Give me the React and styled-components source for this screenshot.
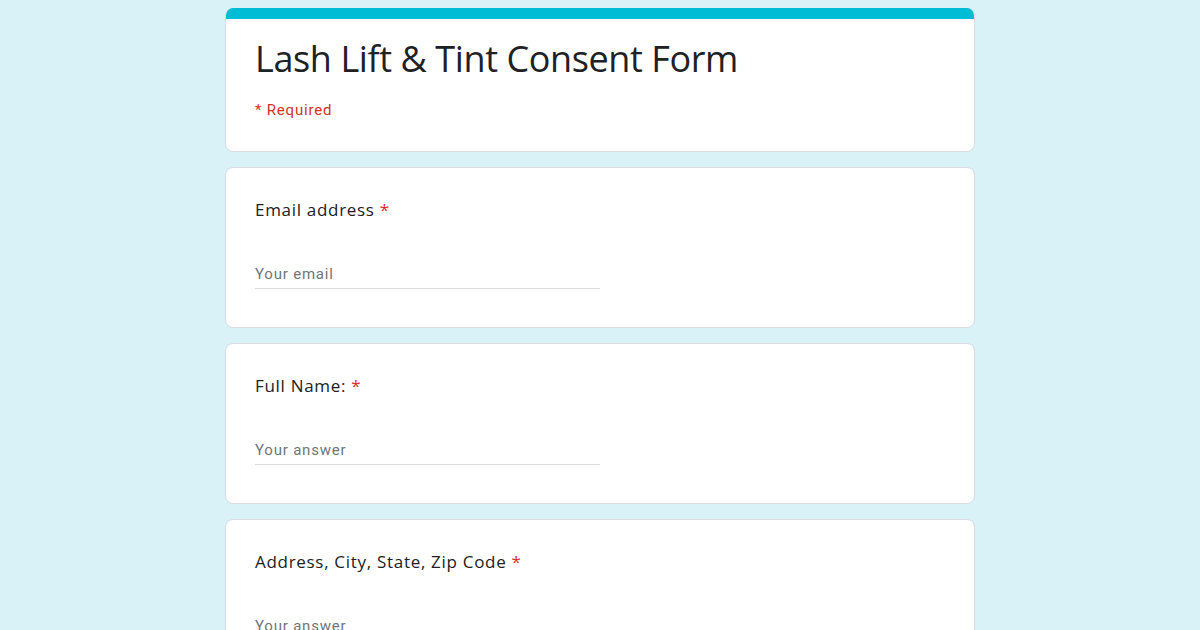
import React from "react";
import styled, { createGlobalStyle } from "styled-components";

const GlobalStyle = createGlobalStyle`
  body {
    margin: 0;
    background: #d9f2f7;
    font-family: "Open Sans", Roboto, sans-serif;
  }
`;

const Page = styled.div`
  width: 750px;
  margin: 8px auto 0;
  display: flex;
  flex-direction: column;
  gap: 15px;
`;

const Card = styled.section`
  background: #fff;
  border: 1px solid #dadce0;
  border-radius: 8px;
  box-sizing: border-box;
  overflow: hidden;
`;

const HeaderCard = styled(Card)`
  border-top: none;
  height: 144px;
`;

const TopBar = styled.div`
  height: 11px;
  background: #00bcd4;
`;

const HeaderBody = styled.div`
  padding: 16px 29px 0;
`;

const Title = styled.h1`
  margin: 0;
  font-family: "Open Sans", sans-serif;
  font-weight: 400;
  font-size: 36px;
  line-height: 48px;
  letter-spacing: -0.4px;
  color: #202124;
`;

const Required = styled.div`
  margin-top: 17px;
  font-family: Roboto, sans-serif;
  font-size: 15px;
  line-height: 20px;
  letter-spacing: 0.8px;
  color: #d93025;
`;

const QuestionCard = styled(Card)`
  height: 161px;
  padding: 30px 29px 0;
`;

const Label = styled.div`
  font-family: "Open Sans", sans-serif;
  font-size: 17px;
  line-height: 24px;
  letter-spacing: 0.7px;
  color: #202124;
`;

const Star = styled.span`
  color: #d93025;
  margin-left: 5px;
`;

const Field = styled.div`
  width: 345px;
  margin-top: 42px;
  padding-bottom: 4px;
  border-bottom: 1px solid #dadce0;
  font-family: Roboto, sans-serif;
  font-size: 15px;
  line-height: 20px;
  letter-spacing: 0.8px;
  color: #70757a;
`;

const questions = [
  { label: "Email address", placeholder: "Your email" },
  { label: "Full Name:", placeholder: "Your answer" },
  { label: "Address, City, State, Zip Code", placeholder: "Your answer" },
];

export default function App() {
  return (
    <>
      <GlobalStyle />
      <Page>
        <HeaderCard>
          <TopBar />
          <HeaderBody>
            <Title>Lash Lift &amp; Tint Consent Form</Title>
            <Required>* Required</Required>
          </HeaderBody>
        </HeaderCard>
        {questions.map((q) => (
          <QuestionCard key={q.label}>
            <Label>
              {q.label}
              <Star>*</Star>
            </Label>
            <Field>{q.placeholder}</Field>
          </QuestionCard>
        ))}
      </Page>
    </>
  );
}
